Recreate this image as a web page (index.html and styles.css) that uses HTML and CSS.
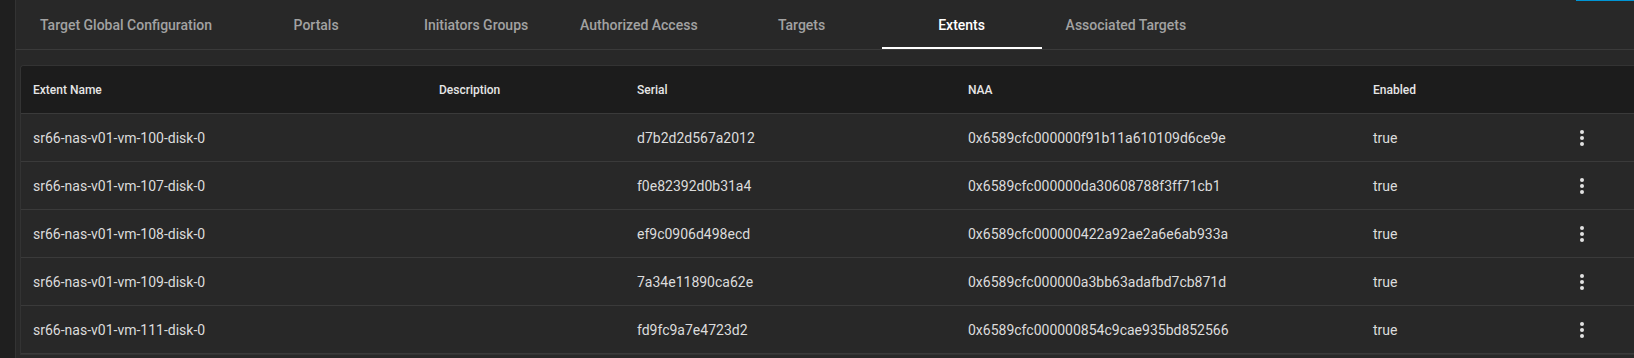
FILE: index.html
```html
<!DOCTYPE html>
<html lang="en">
<head>
  <meta charset="UTF-8">
  <title>iSCSI Extents</title>
  <link rel="stylesheet" href="styles.css">
</head>
<body>
  <div class="layout">
    <div class="sidenav"></div>
    <div class="main">
      <nav class="tabbar">
        <a class="tab">Target Global Configuration</a>
        <a class="tab">Portals</a>
        <a class="tab">Initiators Groups</a>
        <a class="tab">Authorized Access</a>
        <a class="tab">Targets</a>
        <a class="tab active">Extents</a>
        <a class="tab">Associated Targets</a>
        <span class="add-btn"></span>
      </nav>

      <div class="content">
        <div class="card">
          <div class="row head">
            <div class="cell">Extent Name</div>
            <div class="cell">Description</div>
            <div class="cell">Serial</div>
            <div class="cell">NAA</div>
            <div class="cell">Enabled</div>
            <div class="cell"></div>
          </div>

          <div class="row">
            <div class="cell">sr66-nas-v01-vm-100-disk-0</div>
            <div class="cell"></div>
            <div class="cell">d7b2d2d567a2012</div>
            <div class="cell">0x6589cfc000000f91b11a610109d6ce9e</div>
            <div class="cell">true</div>
            <div class="cell actions"><svg viewBox="0 0 24 24"><circle cx="12" cy="6" r="2"/><circle cx="12" cy="12" r="2"/><circle cx="12" cy="18" r="2"/></svg></div>
          </div>
          <div class="row">
            <div class="cell">sr66-nas-v01-vm-107-disk-0</div>
            <div class="cell"></div>
            <div class="cell">f0e82392d0b31a4</div>
            <div class="cell">0x6589cfc000000da30608788f3ff71cb1</div>
            <div class="cell">true</div>
            <div class="cell actions"><svg viewBox="0 0 24 24"><circle cx="12" cy="6" r="2"/><circle cx="12" cy="12" r="2"/><circle cx="12" cy="18" r="2"/></svg></div>
          </div>
          <div class="row">
            <div class="cell">sr66-nas-v01-vm-108-disk-0</div>
            <div class="cell"></div>
            <div class="cell">ef9c0906d498ecd</div>
            <div class="cell">0x6589cfc000000422a92ae2a6e6ab933a</div>
            <div class="cell">true</div>
            <div class="cell actions"><svg viewBox="0 0 24 24"><circle cx="12" cy="6" r="2"/><circle cx="12" cy="12" r="2"/><circle cx="12" cy="18" r="2"/></svg></div>
          </div>
          <div class="row">
            <div class="cell">sr66-nas-v01-vm-109-disk-0</div>
            <div class="cell"></div>
            <div class="cell">7a34e11890ca62e</div>
            <div class="cell">0x6589cfc000000a3bb63adafbd7cb871d</div>
            <div class="cell">true</div>
            <div class="cell actions"><svg viewBox="0 0 24 24"><circle cx="12" cy="6" r="2"/><circle cx="12" cy="12" r="2"/><circle cx="12" cy="18" r="2"/></svg></div>
          </div>
          <div class="row">
            <div class="cell">sr66-nas-v01-vm-111-disk-0</div>
            <div class="cell"></div>
            <div class="cell">fd9fc9a7e4723d2</div>
            <div class="cell">0x6589cfc000000854c9cae935bd852566</div>
            <div class="cell">true</div>
            <div class="cell actions"><svg viewBox="0 0 24 24"><circle cx="12" cy="6" r="2"/><circle cx="12" cy="12" r="2"/><circle cx="12" cy="18" r="2"/></svg></div>
          </div>
        </div>
      </div>
    </div>
  </div>
</body>
</html>
```

FILE: styles.css
```css
body {
  font-family: Roboto, 'Liberation Sans', sans-serif;
  margin: 0; padding: 0;
  background: #282828;
  color: #dcdcdc;
  overflow: hidden;
}
.layout {
  display: flex;
  height: 100vh;
}
.sidenav {
  width: 15px;
  flex: none;
  background: #1f1f1f;
  border-right: 1px solid #333333;
}
.main {
  flex: 1;
  min-width: 0;
  display: flex;
  flex-direction: column;
}

/* tabs */
.tabbar {
  display: flex;
  border-bottom: 1px solid #3a3a3a;
}
.tab {
  min-width: 160px;
  height: 49px;
  padding: 0 24px;
  box-sizing: border-box;
  display: flex;
  align-items: center;
  justify-content: center;
  font-size: 14px;
  font-weight: 500;
  color: #a2a2a2;
  border-bottom: 2px solid transparent;
  padding-top: 2px;
}
.tab.active {
  color: #ffffff;
  border-bottom-color: #ffffff;
}
.add-btn {
  margin-left: auto;
  align-self: flex-start;
  width: 58px;
  height: 1px;
  background: #0095d5;
}

/* table card */
.content {
  padding: 15px 0 0 4px;
}
.card {
  border: 1px solid #333333;
  border-right: 0;
  border-radius: 4px 0 0 0;
  overflow: hidden;
}
.row {
  display: grid;
  grid-template-columns: 406px 198px 331px 405px 188px 1fr;
  height: 47px;
  align-items: center;
  border-bottom: 1px solid #3a3a3a;
  font-size: 14px;
}
.row.head {
  background: #1c1c1c;
  font-size: 12px;
  font-weight: 500;
  color: #e6e6e6;
}
.cell {
  padding: 0 12px;
  white-space: nowrap;
}
.actions {
  display: flex;
  padding-left: 21px;
}
.actions svg {
  width: 24px;
  height: 24px;
  fill: #e2e2e2;
}
```
